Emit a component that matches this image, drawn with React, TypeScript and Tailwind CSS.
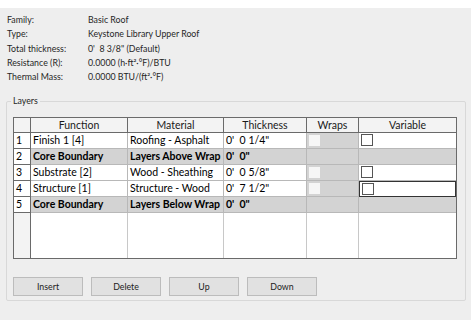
import React from "react";

const info: [string, string][] = [
  ["Family:", "Basic Roof"],
  ["Type:", "Keystone Library Upper Roof"],
  ["Total thickness:", "0'  8 3/8\" (Default)"],
  ["Resistance (R):", "0.0000 (h·ft²·°F)/BTU"],
  ["Thermal Mass:", "0.0000 BTU/(ft²·°F)"],
];

type Row = { n: string; fn: string; mat: string; th: string; core?: boolean; focus?: boolean };
const rows: Row[] = [
  { n: "1", fn: "Finish 1 [4]", mat: "Roofing - Asphalt", th: "0'  0 1/4\"" },
  { n: "2", fn: "Core Boundary", mat: "Layers Above Wrap", th: "0'  0\"", core: true },
  { n: "3", fn: "Substrate [2]", mat: "Wood - Sheathing", th: "0'  0 5/8\"" },
  { n: "4", fn: "Structure [1]", mat: "Structure - Wood", th: "0'  7 1/2\"", focus: true },
  { n: "5", fn: "Core Boundary", mat: "Layers Below Wrap", th: "0'  0\"", core: true },
];

const font = { fontFamily: 'Lato, "Liberation Sans", sans-serif' };

export default function App() {
  return (
    <div className="w-[474px] h-[323px] bg-white overflow-hidden" style={font}>
      <div className="mt-[8px] w-[471px] h-[312px] bg-[#eeeeee] flex flex-col">
        <div className="pt-[5px] pl-[7px] text-[8.8px] leading-[14.25px] text-[#262626]">
          {info.map(([k, v]) => (
            <div key={k} className="flex h-[14.25px]">
              <div className="w-[81px] shrink-0">{k}</div>
              <div className="whitespace-pre">{v}</div>
            </div>
          ))}
        </div>
        <div className="relative mt-[17px] ml-[6px] w-[460px] h-[200px] border border-[#d8d8d8] rounded-[2px] px-[6px] pt-[15px]">
          <div className="absolute left-[4px] top-[-8px] px-[2px] bg-[#eeeeee] text-[8.8px] leading-[14px] text-[#262626]">
            Layers
          </div>
          <div className="w-[444px] border border-[#6a6a6a] bg-white text-[10.5px] text-black">
            <div className="grid grid-cols-[17px_97px_96px_83px_52px_97px] h-[15px] bg-[#f3f3f3] leading-[14px] text-[#1a1a1a]">
              <div className="border-r border-b border-[#6a6a6a]" />
              <div className="border-r border-b border-[#6a6a6a] text-center">Function</div>
              <div className="border-r border-b border-[#6a6a6a] text-center">Material</div>
              <div className="border-r border-b border-[#6a6a6a] text-center">Thickness</div>
              <div className="border-r border-b border-[#6a6a6a] text-center">Wraps</div>
              <div className="border-b border-[#6a6a6a] text-center">Variable</div>
            </div>
            {rows.map((r) => (
              <div
                key={r.n}
                className={`grid grid-cols-[17px_97px_96px_83px_52px_97px] h-[16px] leading-[15px] ${r.core ? "font-bold" : ""}`}
              >
                <div className="border-r border-b border-[#6a6a6a] bg-white pl-[2px] font-normal">{r.n}</div>
                <div className={`border-r border-b border-[#b8b8b8] pl-[2px] whitespace-nowrap overflow-hidden ${r.core ? "bg-[#d3d3d3]" : "bg-white"}`}>{r.fn}</div>
                <div className={`border-r border-b border-[#b8b8b8] pl-[2px] whitespace-nowrap overflow-hidden ${r.core ? "bg-[#d3d3d3]" : "bg-white"}`}>{r.mat}</div>
                <div className={`border-r border-b border-[#b8b8b8] pl-[2px] whitespace-pre ${r.core ? "bg-[#d3d3d3]" : "bg-white"}`}>{r.th}</div>
                <div className="border-r border-b border-[#b8b8b8] bg-[#d3d3d3] pl-[2px] pt-[2px]">
                  {!r.core && <div className="w-[11px] h-[11px] bg-[#f6f6f6]" />}
                </div>
                <div
                  className={`border-b ${r.focus ? "border border-[#333333]" : "border-[#b8b8b8]"} ${r.core ? "bg-[#d3d3d3]" : "bg-white"} pl-[2px] pt-[1px]`}
                >
                  {!r.core && <div className="w-[12px] h-[12px] border border-[#555555] bg-white" />}
                </div>
              </div>
            ))}
            <div className="grid grid-cols-[17px_97px_96px_83px_52px_97px] h-[45px]">
              <div className="border-r border-[#6a6a6a] bg-[#f3f3f3]" />
              <div className="border-r border-[#c8c8c8]" />
              <div className="border-r border-[#c8c8c8]" />
              <div className="border-r border-[#c8c8c8]" />
              <div className="border-r border-[#c8c8c8]" />
              <div />
            </div>
          </div>
          <div className="mt-[18px] flex gap-[8px]">
            {["Insert", "Delete", "Up", "Down"].map((b) => (
              <div
                key={b}
                className="w-[70px] h-[19px] border border-[#bcbcbc] bg-[#e1e1e1] text-[8.8px] leading-[17px] text-center text-[#222222]"
              >
                {b}
              </div>
            ))}
          </div>
        </div>
      </div>
    </div>
  );
}
